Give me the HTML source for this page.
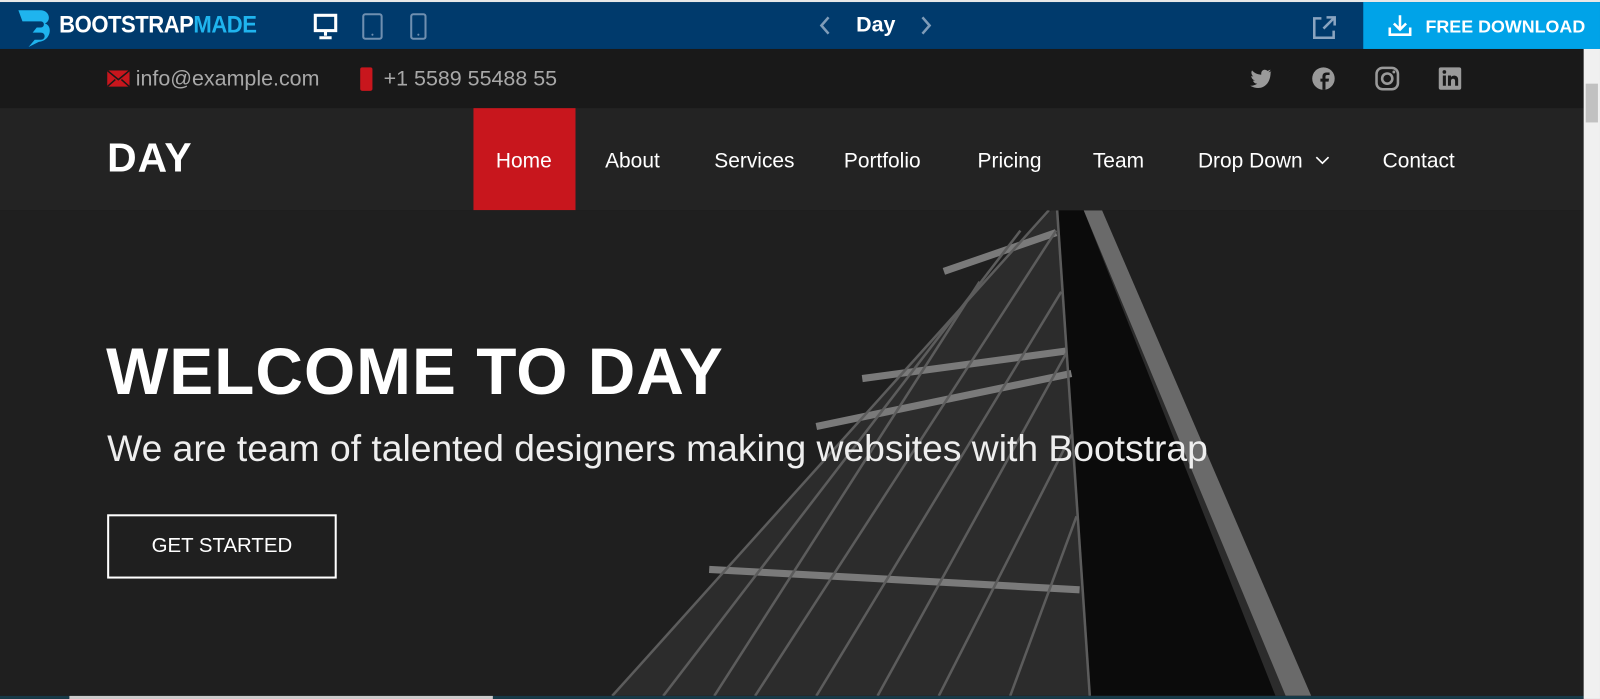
<!DOCTYPE html>
<html><head><meta charset="utf-8"><style>
*{margin:0;padding:0;box-sizing:border-box}
body{width:1600px;height:699px;overflow:hidden;background:#1e1e1e;font-family:"Liberation Sans",sans-serif;position:relative}
#w{position:absolute;left:0;top:0;width:1568px;height:685px;transform:scale(1.0204);transform-origin:0 0}
.abs{position:absolute}
#bar{left:0;top:0;width:1568px;height:48px;background:#003a6c;border-top:2px solid #e8e8e8}
#dl{left:1336px;top:2px;width:232px;height:46px;background:#00a3e8;color:#fff;font-weight:bold;font-size:17.5px;line-height:48px;padding-left:61px;white-space:nowrap;overflow:hidden}
#top{left:0;top:48px;width:1552px;height:58px;background:#191919;color:#a8a8a8;font-size:21px}
#hdr{left:0;top:106px;width:1552px;height:100px;background:#232323}
#hero{left:0;top:206px;width:1552px;height:476px;background:#1f1f1f;overflow:hidden}
.nav{position:absolute;top:0;height:100px;line-height:104px;color:#fff;font-size:20.5px}
#sb{left:1552px;top:48px;width:16px;height:637px;background:#f0f0f0}
</style></head><body><div id="w">
<div id="bar" class="abs">
 <svg class="abs" style="left:14px;top:4px" width="40" height="40" viewBox="0 0 40 40"><path d="M4 4h22c8 0 11 10 4 13c8 2 6 17-6 18l-10 5l6-7h6c5 0 5-7 0-7h-8l4-5h4c4 0 4-6 0-6H8z" fill="#1fb4ee"/></svg>
 <div class="abs" style="left:58px;top:9px;font-size:24px;font-weight:bold;letter-spacing:-0.5px;color:#fff;transform:scaleX(.9);transform-origin:left">BOOTSTRAP<span style="color:#1fb4ee">MADE</span></div>
 <svg class="abs" style="left:306px;top:10px" width="120" height="28" viewBox="0 0 120 28"><rect x="3" y="3" width="20" height="15" fill="none" stroke="#fff" stroke-width="3"/><path d="M13 18v5M7 25h12" stroke="#fff" stroke-width="3"/><rect x="50" y="2" width="18" height="24" rx="2" fill="none" stroke="#6f8fb0" stroke-width="2"/><rect x="97" y="2" width="14" height="24" rx="2" fill="none" stroke="#6f8fb0" stroke-width="2"/><circle cx="59" cy="22" r="1" fill="#6f8fb0"/><circle cx="104" cy="22" r="1" fill="#6f8fb0"/></svg>
 <svg class="abs" style="left:800px;top:12px" width="120" height="22"><path d="M12 3l-7 8 7 8M104 3l7 8-7 8" fill="none" stroke="#7f9cb8" stroke-width="2.5"/></svg>
 <div class="abs" style="left:839px;top:11px;color:#fff;font-weight:bold;font-size:21px">Day</div>
 <svg class="abs" style="left:1285px;top:12px" width="26" height="26"><path d="M10 4H3v19h19v-7M12 14L23 3M15 3h8v8" fill="none" stroke="#8aa4c0" stroke-width="2.5"/></svg>
</div>
<div id="dl" class="abs"><svg class="abs" style="left:24px;top:12px" width="24" height="22"><path d="M12 1v13M6 9l6 6 6-6M2 13v7h20v-7" fill="none" stroke="#fff" stroke-width="2.5"/></svg>FREE DOWNLOAD</div>
<div id="top" class="abs">
 <svg class="abs" style="left:105px;top:21px" width="22" height="16"><rect width="22" height="16" fill="#c8161d"/><path d="M0 0l11 9 11-9M0 16l8-7M22 16l-8-7" stroke="#191919" stroke-width="1.5" fill="none"/></svg>
 <div class="abs" style="left:133px;top:18px">info@example.com</div>
 <div class="abs" style="left:353px;top:18px;width:12px;height:23px;background:#c8161d;border-radius:2px"></div>
 <div class="abs" style="left:376px;top:18px">+1 5589 55488 55</div>
 <svg class="abs" style="left:1224px;top:17px" width="220" height="24" fill="#9a9a9a"><path d="M22 5c-1 .5-2 .7-3 .8 1-.6 2-1.6 2-2.6-1 .6-2 1-3 1.2C16 2.4 12 3.4 12 7.2v1C8 8 5 6.3 3 4c-1.5 2.5 0 5 1.3 6-.8 0-1.4-.3-2-.6 0 2.3 1.7 4 3.6 4.5-.7.2-1.4.2-2 .1.6 1.8 2.3 3 4.3 3-2 1.5-4.5 2.2-7 2 11 6 20-1 20-13z"/><circle cx="73" cy="12" r="11"/><path d="M75 23v-8h3l.5-3H75v-2c0-1 .5-1.5 1.5-1.5H79V6h-3c-3 0-4 2-4 4v2h-2v3h2v8z" fill="#191919"/><rect x="125" y="1.5" width="21" height="21" rx="6" fill="none" stroke="#9a9a9a" stroke-width="2.5"/><circle cx="135.5" cy="12" r="5" fill="none" stroke="#9a9a9a" stroke-width="2.5"/><circle cx="142" cy="5.5" r="1.4"/><rect x="186" y="1" width="22" height="22" rx="2"/><path d="M190 9h3v10h-3zM195 9h3v1.5c1-2 7-2.5 7 2.5v6h-3v-5c0-2.5-4-2.5-4 0v5h-3z" fill="#191919"/><circle cx="191.5" cy="5.5" r="1.8" fill="#191919"/></svg>
</div>
<div id="hdr" class="abs">
 <div class="abs" style="left:105px;top:27px;color:#fff;font-weight:bold;font-size:40px;letter-spacing:1px">DAY</div>
 <div class="abs" style="left:464px;top:0;width:100px;height:100px;background:#c8161d"></div>
 <div class="nav" style="left:486px">Home</div>
 <div class="nav" style="left:593px">About</div>
 <div class="nav" style="left:700px">Services</div>
 <div class="nav" style="left:827px">Portfolio</div>
 <div class="nav" style="left:958px">Pricing</div>
 <div class="nav" style="left:1071px">Team</div>
 <div class="nav" style="left:1174px">Drop Down</div>
 <svg class="abs" style="left:1289px;top:46px" width="14" height="10"><path d="M1 2l6 6 6-6" fill="none" stroke="#fff" stroke-width="1.6"/></svg>
 <div class="nav" style="left:1355px">Contact</div>
</div>
<div id="hero" class="abs">
 <svg class="abs" style="left:0;top:0" width="1552" height="476">
  <polygon points="1030,0 1062,0 1285,476 600,476" fill="#2c2c2c"/>
  <polygon points="1035,0 1062,0 1250,476 1068,476" fill="#0b0b0b"/>
  <polygon points="1062,0 1080,0 1285,476 1260,476" fill="#6a6a6a"/>
  <g stroke="#7a7a7a" stroke-width="7">
   <line x1="925" y1="60" x2="1035" y2="22"/>
   <line x1="845" y1="165" x2="1045" y2="138"/>
   <line x1="800" y1="212" x2="1050" y2="160"/>
   <line x1="695" y1="352" x2="1058" y2="372"/>
  </g>
  <g stroke="#5c5c5c" stroke-width="2.5">
   <line x1="1028" y1="0" x2="600" y2="476"/>
   <line x1="1000" y1="20" x2="650" y2="476"/>
   <line x1="960" y1="70" x2="700" y2="476"/>
   <line x1="1035" y1="20" x2="740" y2="476"/>
   <line x1="1040" y1="80" x2="800" y2="476"/>
   <line x1="1045" y1="140" x2="860" y2="476"/>
   <line x1="1050" y1="220" x2="920" y2="476"/>
   <line x1="1055" y1="300" x2="990" y2="476"/>
   <line x1="1036" y1="0" x2="1068" y2="476"/>
  </g>
 </svg>
 <div class="abs" style="left:104px;top:121px;color:#fff;font-weight:bold;font-size:64.5px;letter-spacing:1px">WELCOME TO DAY</div>
 <div class="abs" style="left:105px;top:213px;color:#eee;font-size:36.5px;white-space:nowrap">We are team of talented designers making websites with Bootstrap</div>
 <div class="abs" style="left:105px;top:298px;width:225px;height:63px;border:2px solid #fff;color:#fff;font-size:20px;text-align:center;line-height:58px">GET STARTED</div>
</div>
<div class="abs" style="left:0;top:682px;width:1552px;height:3px;background:#173a48"></div>
<div class="abs" style="left:68px;top:682px;width:415px;height:3px;background:#ccc"></div>
<div id="sb" class="abs"><div class="abs" style="left:2px;top:34px;width:12px;height:38px;background:#c1c1c1"></div></div>
</div></body></html>
